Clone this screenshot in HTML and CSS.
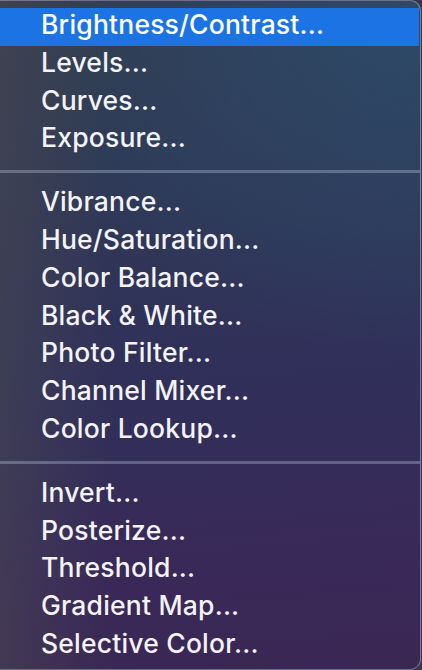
FILE: index.html
```html
<!DOCTYPE html>
<html>
<head>
<meta charset="utf-8">
<link rel="stylesheet" href="styles.css">
</head>
<body>
<div class="menu">
  <div class="group">
    <div class="item selected">Brightness/Contrast...</div>
    <div class="item">Levels...</div>
    <div class="item">Curves...</div>
    <div class="item">Exposure...</div>
  </div>
  <div class="sep"></div>
  <div class="group">
    <div class="item">Vibrance...</div>
    <div class="item">Hue/Saturation...</div>
    <div class="item">Color Balance...</div>
    <div class="item">Black &amp; White...</div>
    <div class="item">Photo Filter...</div>
    <div class="item">Channel Mixer...</div>
    <div class="item">Color Lookup...</div>
  </div>
  <div class="sep"></div>
  <div class="group">
    <div class="item">Invert...</div>
    <div class="item">Posterize...</div>
    <div class="item">Threshold...</div>
    <div class="item">Gradient Map...</div>
    <div class="item">Selective Color...</div>
  </div>
</div>
</body>
</html>
```
FILE: styles.css
```css
html, body {
  margin: 0;
  padding: 0;
  background: #3a3550;
  width: 422px;
  height: 670px;
  overflow: hidden;
}
.menu {
  box-sizing: border-box;
  width: 421px;
  height: 670px;
  padding-top: 7px;
  border-top: 1px solid rgba(200, 210, 225, 0.4);
  border-right: 1px solid rgba(200, 210, 225, 0.45);
  border-bottom: 1px solid rgba(200, 200, 225, 0.35);
  border-radius: 0 11px 11px 0;
  background:
    linear-gradient(90deg, rgba(72, 72, 82, 0.55) 0px, rgba(72, 72, 82, 0) 110px),
    radial-gradient(ellipse 420px 360px at 100% 0%, rgba(44, 76, 110, 0.85), rgba(44, 76, 110, 0) 100%),
    linear-gradient(175deg, #323c4c 0%, #2f3955 25%, #30305a 55%, #392858 85%, #3b2754 100%);
  font-family: Inter, "Noto Sans", sans-serif;
  color: #f3f3f6;
  overflow: hidden;
}
.group {
  display: flex;
  flex-direction: column;
}
.item {
  box-sizing: border-box;
  height: 37.8px;
  padding: 0 0 4.8px 41px;
  font-size: 26.5px;
  font-weight: 500;
  letter-spacing: 0.2px;
  line-height: 33px;
  white-space: nowrap;
}
.item.selected {
  background: #1c74e4;
  color: #ffffff;
  margin-right: 1px;
}
.sep {
  height: 3px;
  margin: 11px 0 12px 0;
  background: rgba(190, 200, 225, 0.35);
}
```
